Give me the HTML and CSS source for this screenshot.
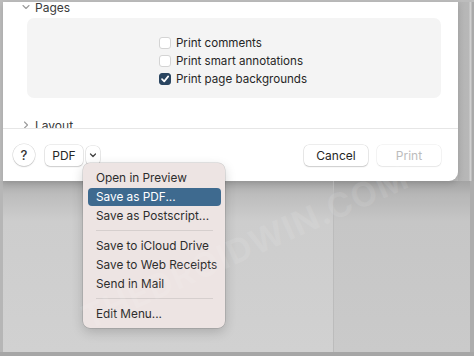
FILE: index.html
```html
<!DOCTYPE html>
<html lang="en">
<head>
<meta charset="utf-8">
<title>Print dialog</title>
<link rel="stylesheet" href="styles.css">
</head>
<body>
<div class="screen">
  <div class="top">
    <div class="dialog">
      <div class="scroll">
        <div class="section-head first">
          <svg class="chev" width="8" height="8" viewBox="0 0 8 8"><path d="M1 2.5 L4 5.5 L7 2.5" fill="none" stroke="#9a9a9a" stroke-width="1.1" stroke-linecap="round" stroke-linejoin="round"/></svg>
          <span>Pages</span>
        </div>
        <div class="panel">
          <div class="options">
            <div class="opt"><span class="cb"></span><span>Print comments</span></div>
            <div class="opt"><span class="cb"></span><span>Print smart annotations</span></div>
            <div class="opt"><span class="cb checked"><svg width="10" height="10" viewBox="0 0 10 10"><path d="M2 5.2 L4.2 7.4 L8.2 2.4" fill="none" stroke="#fff" stroke-width="1.7" stroke-linecap="round" stroke-linejoin="round"/></svg></span><span>Print page backgrounds</span></div>
          </div>
        </div>
        <div class="section-head second">
          <svg class="chev" width="8" height="8" viewBox="0 0 8 8"><path d="M2.5 1 L5.5 4 L2.5 7" fill="none" stroke="#9a9a9a" stroke-width="1.1" stroke-linecap="round" stroke-linejoin="round"/></svg>
          <span>Layout</span>
        </div>
      </div>
      <div class="footer">
        <div class="btn help">?</div>
        <div class="pdf-group">
          <div class="btn pdf">PDF</div>
          <div class="btn pdf-arrow"><svg width="8" height="8" viewBox="0 0 8 8"><path d="M1.5 3 L4 5.5 L6.5 3" fill="none" stroke="#444" stroke-width="1.3" stroke-linecap="round" stroke-linejoin="round"/></svg></div>
        </div>
        <div class="spacer"></div>
        <div class="btn action">Cancel</div>
        <div class="btn action disabled">Print</div>
      </div>
    </div>
    <div class="edge"></div>
  </div>
  <div class="desk">
    <div class="desk-left"></div>
    <div class="desk-right"></div>
  </div>
  <div class="menu">
    <div class="item">Open in Preview</div>
    <div class="item active">Save as PDF...</div>
    <div class="item">Save as Postscript...</div>
    <div class="sep"></div>
    <div class="item">Save to iCloud Drive</div>
    <div class="item">Save to Web Receipts</div>
    <div class="item">Send in Mail</div>
    <div class="sep"></div>
    <div class="item">Edit Menu...</div>
  </div>
  <div class="watermark">THEDROIDWIN.COM</div>
</div>
</body>
</html>
```

FILE: styles.css
```css
* { box-sizing: border-box; }
html, body { margin: 0; padding: 0; }
body {
  font-family: Inter, "Noto Sans", "Liberation Sans", sans-serif;
  color: #2b2b2b;
}
.screen {
  position: relative;
  width: 474px;
  height: 356px;
  overflow: hidden;
  background: #c4c4c4;
  display: flex;
  flex-direction: column;
}
.top {
  display: flex;
  height: 181px;
  flex: none;
  padding-top: 2px;
  background: #bdbdbd;
}
.dialog {
  width: 455px;
  margin-left: 3px;
  background: #fff;
  border-bottom-right-radius: 9px;
  display: flex;
  flex-direction: column;
  overflow: hidden;
  position: relative;
  z-index: 1;
  box-shadow: 0 2px 6px rgba(0,0,0,0.15);
}
.edge {
  flex: 1;
  background: linear-gradient(90deg, #b4b4b4 0, #b8b8b8 11px, #cfcfcf 12px, #cfcfcf 13px, #a9a9a9 14px);
}
.scroll {
  height: 126px;
  flex: none;
  overflow: hidden;
}
.section-head {
  display: flex;
  align-items: center;
  height: 16px;
  padding-left: 19px;
  font-size: 12px;
  color: #3a3a3a;
  gap: 5px;
  white-space: nowrap;
}
.section-head.first { margin-top: -3px; }
.section-head.second { margin-top: 19px; }
.chev { flex: none; }
.panel {
  margin: 3px 0 0 24px;
  width: 414px;
  height: 80px;
  background: #f4f4f4;
  border-radius: 7px;
  display: flex;
  justify-content: center;
  padding-top: 16px;
  padding-right: 2px;
}
.options {
  display: flex;
  flex-direction: column;
}
.opt {
  display: flex;
  align-items: center;
  height: 18px;
  gap: 5px;
  font-size: 11.6px;
  color: #262626;
  white-space: nowrap;
}
.cb {
  width: 12px;
  height: 12px;
  border-radius: 3px;
  background: #fff;
  border: 1px solid #d4d4d4;
  display: flex;
  align-items: center;
  justify-content: center;
  flex: none;
}
.cb.checked {
  background: #2a4560;
  border-color: #2a4560;
}
.footer {
  flex: 1;
  border-top: 1px solid #e6e6e6;
  display: flex;
  align-items: center;
  padding: 0 17px 0 10px;
}
.btn {
  background: #fff;
  border-radius: 5px;
  box-shadow: 0 0 0 0.5px rgba(0,0,0,0.14), 0 1px 1.5px rgba(0,0,0,0.14);
  height: 21px;
  display: flex;
  align-items: center;
  justify-content: center;
  font-size: 12px;
  color: #262626;
  white-space: nowrap;
  flex: none;
}
.help {
  width: 22px;
  height: 22px;
  border-radius: 50%;
  font-size: 13px;
  font-weight: 500;
  color: #333;
}
.pdf-group {
  display: flex;
  margin-left: 10px;
  gap: 3px;
}
.pdf { width: 38px; }
.pdf-arrow { width: 14px; height: 19px; margin-top: 1px; }
.spacer { flex: 1; }
.action { width: 64px; margin-left: 9px; }
.action.disabled { color: #bcbcbc; box-shadow: 0 0 0 0.5px rgba(0,0,0,0.08), 0 1px 1.5px rgba(0,0,0,0.06); }
.desk {
  flex: 1;
  display: flex;
  background: linear-gradient(180deg, #a9a9a9 0, #bdbdbd 14px, #cdcdcd 40px, #d1d1d1 100%);
  border-bottom: 4px solid #a6a6a6;
}
.desk-left {
  width: 334px;
  border-left: 3px solid #b6b6b6;
  border-right: 1px solid #bcbcbc;
}
.desk-right {
  flex: 1;
  background: rgba(0,0,0,0.03);
  border-right: 4px solid #adadad;
}
.watermark {
  position: absolute;
  left: 75px;
  top: 300px;
  font-size: 34px;
  font-weight: 700;
  letter-spacing: 1px;
  color: rgba(255,255,255,0.09);
  transform: rotate(-24deg);
  transform-origin: left top;
  white-space: nowrap;
  z-index: 3;
  pointer-events: none;
}
.menu {
  position: absolute;
  left: 83px;
  top: 163px;
  width: 142px;
  height: 165px;
  padding: 5px 4px 4px 5px;
  background: #ede4e3;
  border-radius: 7px;
  box-shadow: 0 0 0 0.5px rgba(0,0,0,0.18), 0 4px 12px rgba(0,0,0,0.18);
  z-index: 2;
}
.item {
  height: 19px;
  display: flex;
  align-items: center;
  padding-left: 8px;
  font-size: 11.8px;
  color: #2d2d2d;
  border-radius: 4px;
  white-space: nowrap;
}
.item.active {
  background: #3e6a8f;
  color: #fff;
  height: 18px;
  margin: 1px 0 0;
}
.sep {
  height: 11px;
  display: flex;
  align-items: center;
  margin: 0 8px;
}
.sep::before {
  content: "";
  flex: 1;
  height: 1px;
  background: #d6cfce;
}
```
